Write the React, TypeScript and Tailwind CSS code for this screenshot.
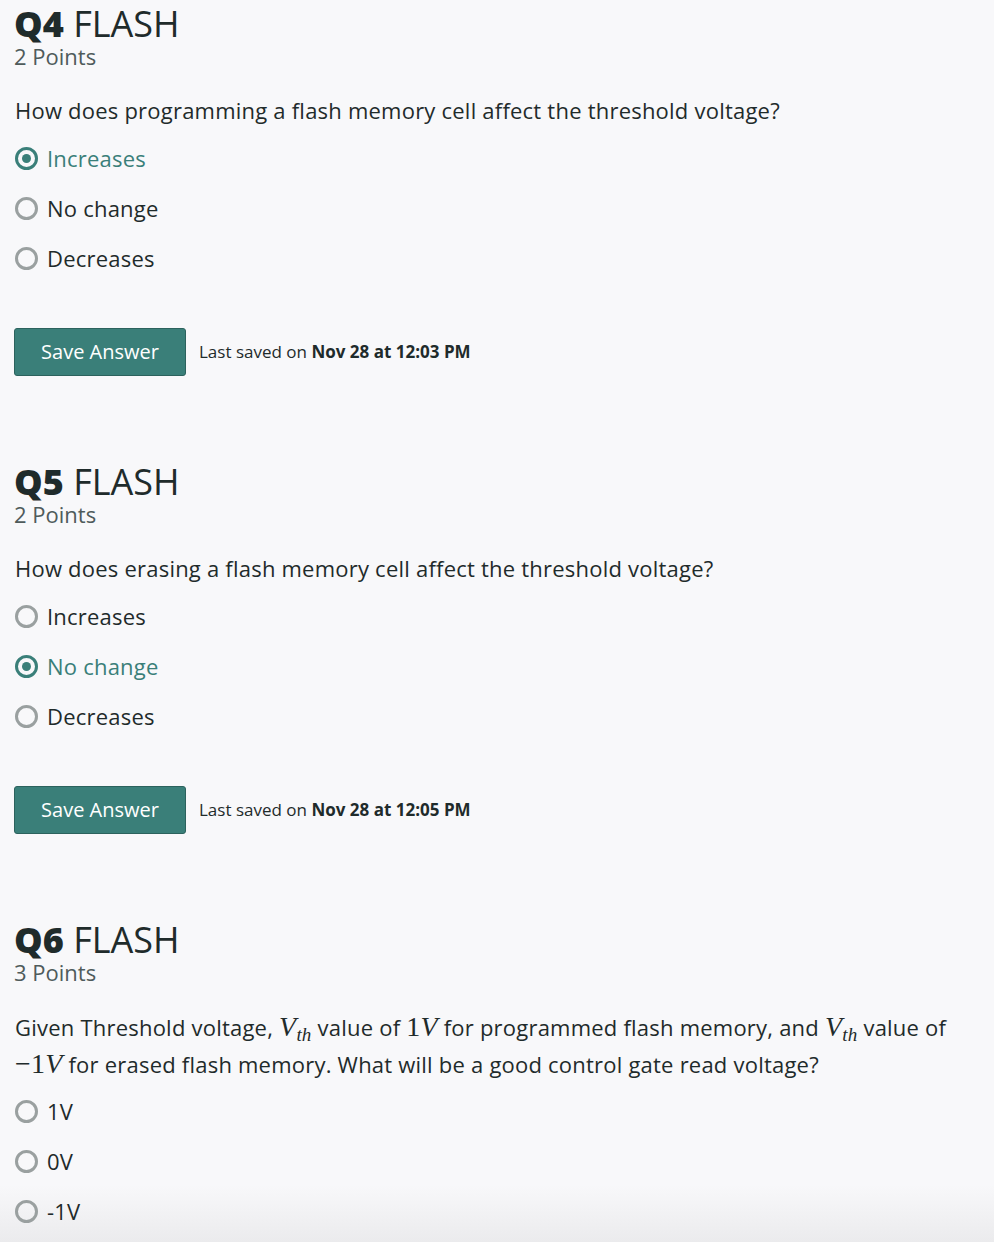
import React from 'react';

type Opt = { label: React.ReactNode; selected?: boolean };

const Radio = ({ selected }: { selected?: boolean }) => (
    <span
        className={`flex h-[23px] w-[23px] shrink-0 items-center justify-center rounded-full border-[3px] ${selected ? 'border-[#3a7f79]' : 'border-[#9aa0a0]'}`}
    >
        {selected && <span className="h-[9px] w-[9px] rounded-full bg-[#3a7f79]" />}
    </span>
);

const Options = ({ options, className }: { options: Opt[]; className: string }) => (
    <div className={`flex flex-col ${className}`}>
        {options.map((o, i) => (
            <label key={i} className="flex h-[50px] items-center gap-[9px] pl-[15px]">
                <Radio selected={o.selected} />
                <span className={`text-[22px] tracking-[0.01em] ${o.selected ? 'text-[#3a7f79]' : 'text-[#1f2b2b]'}`}>{o.label}</span>
            </label>
        ))}
    </div>
);

const Header = ({ num, points }: { num: string; points: string }) => (
    <div className="pl-[14px] pt-[3px]">
        <h2 className="text-[36px] leading-[41px] text-[#1f2b2b]">
            <span className="font-extrabold">{num}</span> FLASH
        </h2>
        <div className="text-[22px] leading-[24px] text-[#4f5b5b]">{points}</div>
    </div>
);

const SaveRow = ({ time }: { time: string }) => (
    <div className="mt-[45px] flex items-center gap-[13px] pl-[14px]">
        <button className="h-[48px] w-[172px] rounded-[3px] border border-[#2c625d] bg-[#3a7f79] text-[20px] text-white">
            Save Answer
        </button>
        <span className="text-[17px] text-[#1f2b2b]">
            Last saved on <b>Nov 28 at {time}</b>
        </span>
    </div>
);

const V = () => (
    <span className="font-['Liberation_Serif',serif] text-[28px] leading-none italic">
        V<span className="relative top-[5px] text-[19px]">th</span>
    </span>
);

const M = ({ children }: { children: React.ReactNode }) => (
    <span className="font-['Liberation_Serif',serif] text-[28px] leading-none">{children}</span>
);

export default function App() {
    return (
        <div className="min-h-[1242px] bg-[linear-gradient(to_bottom,#f8f8fa_0px,#f8f8fa_1185px,#ebebed_1242px)] font-['Open_Sans',sans-serif] text-[#1f2b2b]">
            <section>
                <Header num="Q4" points="2 Points" />
                <p className="mt-[27px] pl-[15px] text-[22px] leading-[30px] tracking-[0.01em]">
                    How does programming a flash memory cell affect the threshold voltage?
                </p>
                <Options
                    className="mt-[8px]"
                    options={[{ label: 'Increases', selected: true }, { label: 'No change' }, { label: 'Decreases' }]}
                />
                <SaveRow time="12:03 PM" />
            </section>
            <section className="mt-[82px]">
                <Header num="Q5" points="2 Points" />
                <p className="mt-[27px] pl-[15px] text-[22px] leading-[30px] tracking-[0.01em]">
                    How does erasing a flash memory cell affect the threshold voltage?
                </p>
                <Options
                    className="mt-[8px]"
                    options={[{ label: 'Increases' }, { label: 'No change', selected: true }, { label: 'Decreases' }]}
                />
                <SaveRow time="12:05 PM" />
            </section>
            <section className="mt-[82px]">
                <Header num="Q6" points="3 Points" />
                <p className="mt-[25px] pl-[15px] pr-[20px] text-[22px] leading-[37px] tracking-[0.01em]">
                    Given Threshold voltage, <V /> value of <M>1<i>V</i></M> for programmed flash memory, and <V /> value of{' '}
                    <M>−1<i>V</i></M> for erased flash memory. What will be a good control gate read voltage?
                </p>
                <Options className="mt-[3px]" options={[{ label: '1V' }, { label: '0V' }, { label: '-1V' }]} />
            </section>
        </div>
    );
}
